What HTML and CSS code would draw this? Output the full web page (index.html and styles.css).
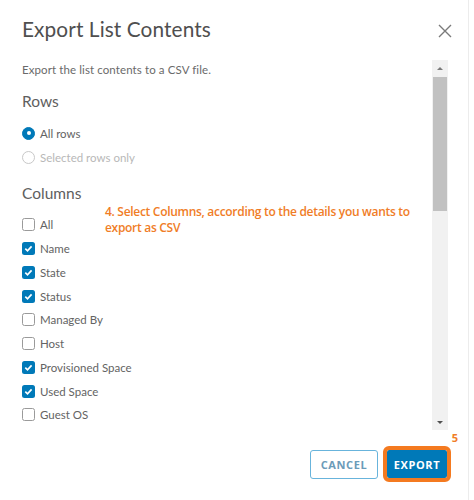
FILE: index.html
```html
<!DOCTYPE html>
<html>
<head>
<meta charset="utf-8">
<link rel="stylesheet" href="styles.css">
</head>
<body>
<div class="modal">
  <div class="header">
    <h1 class="title">Export List Contents</h1>
    <svg class="close" width="14" height="14" viewBox="0 0 14 14"><path d="M1 1 L13 13 M13 1 L1 13" stroke="#7a7a7a" stroke-width="1.4" fill="none"/></svg>
  </div>
  <div class="body">
    <div class="content">
      <p class="desc">Export the list contents to a CSV file.</p>
      <h2 class="section">Rows</h2>
      <div class="opt"><span class="radio on"></span><span class="lbl">All rows</span></div>
      <div class="opt disabled"><span class="radio"></span><span class="lbl">Selected rows only</span></div>
      <h2 class="section cols">Columns</h2>
      <div class="opt chk"><span class="box"></span><span class="lbl">All</span></div>
      <div class="opt chk"><span class="box on"><svg viewBox="0 0 13 13" width="13" height="13"><path d="M3.3 6.7 L5.5 8.8 L9.6 4.4" stroke="#fff" stroke-width="1.7" fill="none"/></svg></span><span class="lbl">Name</span></div>
      <div class="opt chk"><span class="box on"><svg viewBox="0 0 13 13" width="13" height="13"><path d="M3.3 6.7 L5.5 8.8 L9.6 4.4" stroke="#fff" stroke-width="1.7" fill="none"/></svg></span><span class="lbl">State</span></div>
      <div class="opt chk"><span class="box on"><svg viewBox="0 0 13 13" width="13" height="13"><path d="M3.3 6.7 L5.5 8.8 L9.6 4.4" stroke="#fff" stroke-width="1.7" fill="none"/></svg></span><span class="lbl">Status</span></div>
      <div class="opt chk"><span class="box"></span><span class="lbl">Managed By</span></div>
      <div class="opt chk"><span class="box"></span><span class="lbl">Host</span></div>
      <div class="opt chk"><span class="box on"><svg viewBox="0 0 13 13" width="13" height="13"><path d="M3.3 6.7 L5.5 8.8 L9.6 4.4" stroke="#fff" stroke-width="1.7" fill="none"/></svg></span><span class="lbl">Provisioned Space</span></div>
      <div class="opt chk"><span class="box on"><svg viewBox="0 0 13 13" width="13" height="13"><path d="M3.3 6.7 L5.5 8.8 L9.6 4.4" stroke="#fff" stroke-width="1.7" fill="none"/></svg></span><span class="lbl">Used Space</span></div>
      <div class="opt chk"><span class="box"></span><span class="lbl">Guest OS</span></div>
      <div class="note">4. Select Columns, according to the details you wants to<br>export as CSV</div>
    </div>
    <div class="scrollbar">
      <div class="arrow up"></div>
      <div class="thumb"></div>
      <div class="track"></div>
      <div class="arrow down"></div>
    </div>
  </div>
  <div class="footer">
    <button class="btn cancel">CANCEL</button>
    <div class="export-wrap">
      <button class="btn export">EXPORT</button>
      <span class="step">5</span>
    </div>
  </div>
</div>
</body>
</html>
```

FILE: styles.css
```css
* { box-sizing: border-box; }
html, body { margin: 0; padding: 0; background: #fff; }
body { width: 474px; height: 500px; overflow: hidden; font-family: "Lato", "Open Sans", sans-serif; color: #565656; }

.modal { width: 469px; height: 500px; border-right: 1px solid #ececec; display: flex; flex-direction: column; }

.header { height: 60px; display: flex; align-items: flex-start; justify-content: space-between; padding: 16px 16px 0 22px; }
.title { margin: 0; font-family: "Lato", sans-serif; font-weight: 400; font-size: 20.8px; line-height: 26px; color: #4f4f4f; letter-spacing: 0.1px; }
.close { margin-top: 8px; }

.body { height: 370px; display: flex; }
.content { position: relative; flex: 1; padding-left: 22px; }
.desc { margin: 0; font-size: 11.5px; line-height: 20px; color: #6a6a6a; letter-spacing: 0.1px; }
.section { margin: 10px 0 0; width: max-content; font-weight: 400; font-size: 15.5px; line-height: 22px; color: #5e5e5e; }
.section.cols { margin-top: 13px; margin-bottom: 9px; }
.section + .opt { margin-top: 9px; }
.section.cols + .opt { margin-top: 0; }

.opt { display: flex; width: max-content; align-items: center; height: 24px; font-size: 11.5px; color: #636363; }
.opt.chk { height: 23.75px; }
.opt .lbl { margin-left: 5px; }
.opt.disabled { color: #b8b8b8; }

.radio { width: 13px; height: 13px; border-radius: 50%; border: 1px solid #9a9a9a; position: relative; }
.radio.on { background: #0079b8; border-color: #0079b8; }
.radio.on::after { content: ""; position: absolute; left: 3.5px; top: 3.5px; width: 4px; height: 4px; border-radius: 50%; background: #fff; }
.disabled .radio { border-color: #c8c8c8; }

.box { width: 13px; height: 13px; border-radius: 2.5px; border: 1px solid #9a9a9a; display: flex; }
.box.on { background: #0079b8; border: none; }

.note { position: absolute; left: 105px; top: 144px; white-space: nowrap; font-family: "Open Sans", sans-serif; font-weight: 600; font-size: 12px; line-height: 16px; color: #f07d27; letter-spacing: -0.3px; }

.scrollbar { width: 16px; margin-right: 20px; background: #f1f1f1; display: flex; flex-direction: column; align-items: center; }
.arrow { height: 17px; width: 16px; position: relative; }
.arrow::after { content: ""; position: absolute; left: 5px; border-left: 3px solid transparent; border-right: 3px solid transparent; }
.arrow.up::after { top: 7px; border-bottom: 3px solid #7a7a7a; }
.arrow.down::after { top: 8px; border-top: 3px solid #505050; }
.thumb { width: 14px; height: 134px; background: #c1c1c1; }
.track { flex: 1; }

.footer { flex: 1; display: flex; justify-content: flex-end; align-items: flex-start; padding: 20px 21px 0 0; }
.btn { font-family: "Open Sans", sans-serif; font-weight: 700; font-size: 11px; letter-spacing: 0.6px; border-radius: 3px; cursor: pointer; }
.cancel { width: 68px; height: 29px; background: #fff; border: 1px solid #68b4dc; color: #6b9bb9; }
.export-wrap { position: relative; margin-left: 9px; }
.export { width: 60px; height: 28px; background: #0079b8; border: none; color: #fff; border-radius: 2px; outline: 4px solid #f47a20; outline-offset: 0; }
.step { position: absolute; right: -11px; top: -20px; font-family: "Open Sans", sans-serif; font-weight: 700; font-size: 11px; color: #f07d27; }
```
